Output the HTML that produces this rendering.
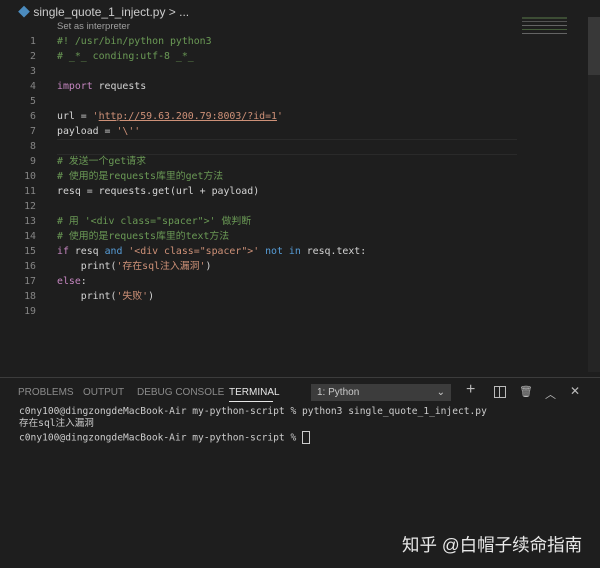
<!DOCTYPE html>
<html><head><meta charset="utf-8"><style>
body{margin:0;width:600px;height:568px;background:#1e1e1e;overflow:hidden;position:relative;font-family:"Liberation Sans","Noto Sans CJK SC",sans-serif;}
.mono{font-family:"DejaVu Sans Mono","Noto Sans CJK SC",monospace;}
#tab{position:absolute;left:18px;top:3px;color:#cccccc;font-size:12px;}
#hint{position:absolute;left:57px;top:21px;color:#a0a0a0;font-size:9.5px;}
.ln{position:absolute;left:0;width:36px;text-align:right;color:#858585;font-size:9.9px;line-height:15px;height:15px;overflow:visible}
.cd{position:absolute;left:57px;color:#d4d4d4;font-size:9.9px;line-height:15px;height:15px;white-space:pre;}
.c{color:#6a9955}.s{color:#ce9178}.k{color:#c586c0}.b{color:#569cd6}
.pt{position:absolute;top:387px;font-size:10px;color:#8b8b8b;}
.term{position:absolute;left:19px;font-size:9.6px;line-height:12.5px;height:12.5px;color:#cccccc;white-space:pre;}
</style></head><body>
<div id="tab"><span style="color:#4b8bbe">◆</span> single_quote_1_inject.py &gt; ...</div>
<div id="hint">Set as interpreter</div>
<div style="position:absolute;left:57px;top:139px;width:460px;height:14px;border-top:1px solid #2a2a2a;border-bottom:1px solid #2a2a2a"></div>
<div style="position:absolute;left:588px;top:17px;width:12px;height:355px;background:#252525"></div>
<div style="position:absolute;left:588px;top:17px;width:12px;height:58px;background:#383838"></div>
<div style="position:absolute;left:522px;top:17px;width:45px;height:30px;opacity:.5;background:linear-gradient(#5a7a4a 0 2px,transparent 2px 4px,#888 4px 5px,transparent 5px 8px,#aaa 8px 9px,transparent 9px 12px,#6a9955 12px 13px,transparent 13px 16px,#aaa 16px 17px,transparent 17px);"></div>
<div class="mono">
<div class="ln" style="top:34px">1</div><div class="cd c" style="top:34px">#! /usr/bin/python python3</div>
<div class="ln" style="top:49px">2</div><div class="cd c" style="top:49px"># _*_ conding:utf-8 _*_</div>
<div class="ln" style="top:64px">3</div>
<div class="ln" style="top:79px">4</div><div class="cd" style="top:79px"><span class="k">import</span> requests</div>
<div class="ln" style="top:94px">5</div>
<div class="ln" style="top:109px">6</div><div class="cd" style="top:109px">url = <span class="s">'<u>http://59.63.200.79:8003/?id=1</u>'</span></div>
<div class="ln" style="top:124px">7</div><div class="cd" style="top:124px">payload = <span class="s">'\''</span></div>
<div class="ln" style="top:139px">8</div>
<div class="ln" style="top:154px">9</div><div class="cd c" style="top:154px"># 发送一个get请求</div>
<div class="ln" style="top:169px">10</div><div class="cd c" style="top:169px"># 使用的是requests库里的get方法</div>
<div class="ln" style="top:184px">11</div><div class="cd" style="top:184px">resq = requests.get(url + payload)</div>
<div class="ln" style="top:199px">12</div>
<div class="ln" style="top:214px">13</div><div class="cd c" style="top:214px"># 用 '&lt;div class="spacer"&gt;' 做判断</div>
<div class="ln" style="top:229px">14</div><div class="cd c" style="top:229px"># 使用的是requests库里的text方法</div>
<div class="ln" style="top:244px">15</div><div class="cd" style="top:244px"><span class="k">if</span> resq <span class="b">and</span> <span class="s">'&lt;div class="spacer"&gt;'</span> <span class="b">not in</span> resq.text:</div>
<div class="ln" style="top:259px">16</div><div class="cd" style="top:259px">    print(<span class="s">'存在sql注入漏洞'</span>)</div>
<div class="ln" style="top:274px">17</div><div class="cd" style="top:274px"><span class="k">else</span>:</div>
<div class="ln" style="top:289px">18</div><div class="cd" style="top:289px">    print(<span class="s">'失败'</span>)</div>
<div class="ln" style="top:304px">19</div>
</div>
<div style="position:absolute;left:0;top:377px;width:600px;height:1px;background:#3c3c3c"></div>
<div class="pt" style="left:18px">PROBLEMS</div>
<div class="pt" style="left:83px">OUTPUT</div>
<div class="pt" style="left:137px">DEBUG CONSOLE</div>
<div class="pt" style="left:229px;color:#e7e7e7">TERMINAL</div>
<div style="position:absolute;left:229px;top:401px;width:44px;height:1px;background:#e7e7e7"></div>
<div style="position:absolute;left:311px;top:384px;width:140px;height:17px;background:#3c3c3c;color:#ccc;font-size:10px;line-height:17px;padding-left:6px;box-sizing:border-box">1: Python<span style="position:absolute;right:6px">⌄</span></div>
<div style="position:absolute;left:466px;top:381px;color:#bbb;font-size:16px">+</div>
<div style="position:absolute;left:494px;top:386px;width:10px;height:10px;border:1px solid #bbb"><div style="position:absolute;left:4px;top:0;width:1px;height:10px;background:#bbb"></div></div>
<div style="position:absolute;left:519px;top:385px;color:#bbb;font-size:11px">🗑</div>
<div style="position:absolute;left:545px;top:386px;color:#bbb;font-size:11px">︿</div>
<div style="position:absolute;left:570px;top:384px;color:#bbb;font-size:12px">✕</div>
<div class="mono">
<div class="term" style="top:406px">c0ny100@dingzongdeMacBook-Air my-python-script % python3 single_quote_1_inject.py</div>
<div class="term" style="top:418px">存在sql注入漏洞</div>
<div class="term" style="top:431px">c0ny100@dingzongdeMacBook-Air my-python-script % <span style="display:inline-block;width:6px;height:11px;border:1px solid #ccc;vertical-align:middle"></span></div>
</div>
<div style="position:absolute;left:402px;top:532px;color:#e8e8e8;font-size:17.5px">知乎 @白帽子续命指南</div>
</body></html>
